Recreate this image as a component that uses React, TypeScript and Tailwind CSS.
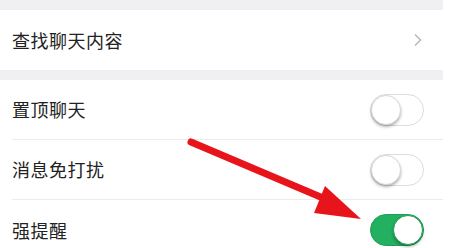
import React from 'react'

const font = { fontFamily: '"Noto Sans CJK SC", "Noto Sans", sans-serif' }

function Toggle({ on }: { on?: boolean }) {
  return (
    <div
      className={`relative h-[32px] w-[54px] rounded-full border ${
        on ? 'bg-[#23b060] border-[#1f9f55]' : 'bg-white border-[#dcdcdc]'
      }`}
    >
      <div
        className={`absolute top-[0px] h-[30px] w-[30px] rounded-full bg-white shadow-[0_2px_3px_rgba(0,0,0,0.3)] ${
          on ? 'right-[0px] border border-[#1f9f55]' : 'left-[0px] border border-[#d8d8d8]'
        }`}
      />
    </div>
  )
}

function Row({ label, children, divider }: { label: string; children?: React.ReactNode; divider?: boolean }) {
  return (
    <div className="pl-[12px] bg-white">
      <div className={`h-[60px] flex items-center justify-between pr-[19px] ${divider ? 'border-b border-[#ececec]' : ''}`}>
        <span className="text-[18px] text-[#222] tracking-[0.5px]">{label}</span>
        {children}
      </div>
    </div>
  )
}

export default function App() {
  return (
    <div className="relative w-[476px] h-[248px] overflow-hidden bg-white" style={font}>
      <div className="w-[443px]">
        <div className="h-[10px] bg-[#f0f0f2]" />
        <Row label="查找聊天内容">
          <svg width="10" height="14" viewBox="0 0 10 14" className="mr-[1px]">
            <path d="M2 1.5 L7.5 7 L2 12.5" fill="none" stroke="#b5b5b5" strokeWidth="1.4" />
          </svg>
        </Row>
        <div className="h-[10px] bg-[#f0f0f2]" />
        <Row label="置顶聊天" divider>
          <Toggle />
        </Row>
        <Row label="消息免打扰" divider>
          <Toggle />
        </Row>
        <Row label="强提醒">
          <Toggle on />
        </Row>
      </div>

      {/* red annotation arrow */}
      <svg className="absolute left-0 top-0" width="476" height="248" viewBox="0 0 476 248">
        <line x1="191" y1="142" x2="330" y2="201" stroke="#e8141b" strokeWidth="7" strokeLinecap="round" />
        <polygon points="325,186 361,219 314,213" fill="#e8141b" />
      </svg>
    </div>
  )
}
